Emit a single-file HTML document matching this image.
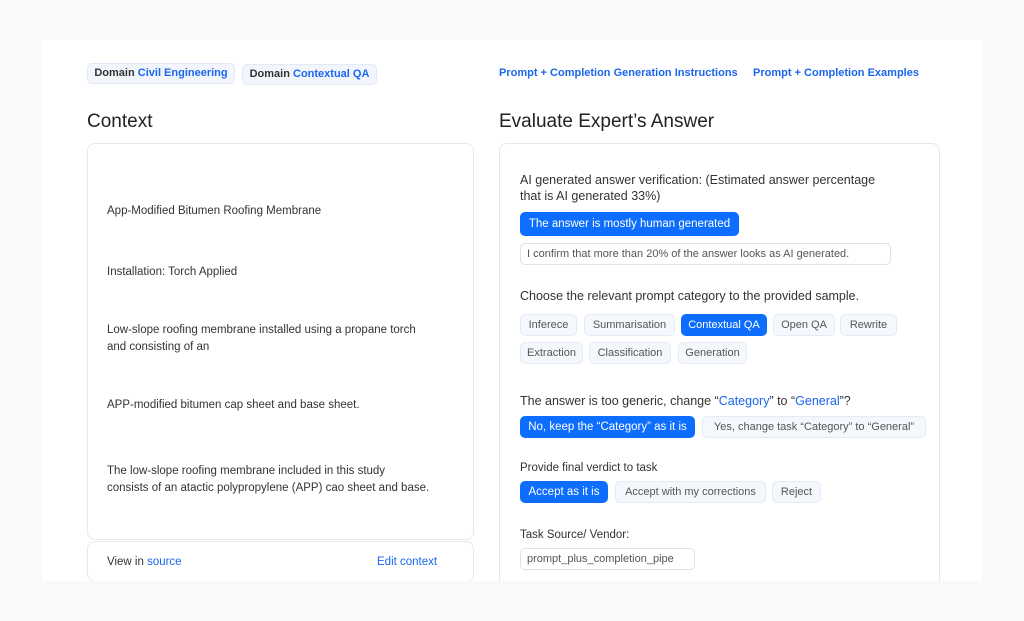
<!DOCTYPE html>
<html><head><meta charset="utf-8"><style>
*{margin:0;padding:0;box-sizing:border-box}
body{width:1024px;height:621px;background:#f8f9fb;font-family:"Liberation Sans",sans-serif;color:#2a2a2e;position:relative;overflow:hidden}
.panel{position:absolute;left:42px;top:40px;width:940px;height:541px;background:#fff}
.a{position:absolute;white-space:nowrap}
.tag{position:absolute;height:21px;line-height:19px;text-align:center;font-size:11px;font-weight:bold;background:#f2f6fc;border:1px solid #e2eaf6;border-radius:5px;color:#333;white-space:nowrap}
.h{font-size:19px;color:#222}
.box{position:absolute;border:1px solid #e6e8ec;border-radius:8px;background:#fff}
.t{font-size:11.5px;color:#333;line-height:17px}
.q{font-size:12.5px;color:#333;line-height:16px}
.chip{position:absolute;height:22px;line-height:20px;text-align:center;font-size:11px;color:#555;background:#f4f7fc;border:1px solid #e4ebf6;border-radius:5px;white-space:nowrap}
.on{background:#0d6efd;color:#fff;border-color:#0d6efd}
.inp{position:absolute;height:22px;line-height:20px;padding:0 6px;font-size:11px;color:#555;background:#fff;border:1px solid #dfe2e7;border-radius:5px;white-space:nowrap}
.b{color:#1a66ee}
</style></head><body>
<div class="panel"></div>
<div class="tag" style="left:87px;top:63px;width:148px">Domain <span class="b">Civil Engineering</span></div>
<div class="tag" style="left:242px;top:64px;width:135px">Domain <span class="b">Contextual QA</span></div>
<div class="a b" style="left:499px;top:67px;font-size:11px;font-weight:bold">Prompt + Completion Generation Instructions</div>
<div class="a b" style="left:753px;top:67px;font-size:11px;font-weight:bold">Prompt + Completion Examples</div>
<div class="a h" style="left:87px;top:111px">Context</div>
<div class="a h" style="left:499px;top:111px">Evaluate Expert’s Answer</div>

<div class="box" style="left:87px;top:143px;width:387px;height:397px"></div>
<div class="a t" style="left:107px;top:203px">App-Modified Bitumen Roofing Membrane</div>
<div class="a t" style="left:107px;top:264px">Installation: Torch Applied</div>
<div class="a t" style="left:107px;top:322px">Low-slope roofing membrane installed using a propane torch<br>and consisting of an</div>
<div class="a t" style="left:107px;top:397px">APP-modified bitumen cap sheet and base sheet.</div>
<div class="a t" style="left:107px;top:463px">The low-slope roofing membrane included in this study<br>consists of an atactic polypropylene (APP) cao sheet and base.</div>
<div class="box" style="left:87px;top:541px;width:387px;height:41px"></div>
<div class="a t" style="left:107px;top:554px">View in <span class="b">source</span></div>
<div class="a t" style="left:377px;top:554px;color:#1a66ee">Edit context</div>

<div class="box" style="left:499px;top:143px;width:441px;height:460px"></div>
<div class="a q" style="left:520px;top:172px">AI generated answer verification: (Estimated answer percentage<br>that is AI generated 33%)</div>
<div class="chip on" style="left:520px;top:212px;width:219px;height:24px;line-height:22px;font-size:11.5px">The answer is mostly human generated</div>
<div class="inp" style="left:520px;top:243px;width:371px">I confirm that more than 20% of the answer looks as AI generated.</div>
<div class="a q" style="left:520px;top:288px">Choose the relevant prompt category to the provided sample.</div>
<div class="chip" style="left:520px;top:314px;width:57px">Inferece</div>
<div class="chip" style="left:584px;top:314px;width:91px">Summarisation</div>
<div class="chip on" style="left:681px;top:314px;width:86px">Contextual QA</div>
<div class="chip" style="left:773px;top:314px;width:62px">Open QA</div>
<div class="chip" style="left:840px;top:314px;width:57px">Rewrite</div>
<div class="chip" style="left:520px;top:342px;width:63px">Extraction</div>
<div class="chip" style="left:589px;top:342px;width:82px">Classification</div>
<div class="chip" style="left:678px;top:342px;width:69px">Generation</div>
<div class="a q" style="left:520px;top:393px">The answer is too generic, change “<span class="b">Category</span>” to “<span class="b">General</span>”?</div>
<div class="chip on" style="left:520px;top:416px;width:175px;font-size:11.5px">No, keep the “Category” as it is</div>
<div class="chip" style="left:702px;top:416px;width:224px">Yes, change task “Category” to “General”</div>
<div class="a t" style="left:520px;top:460px">Provide final verdict to task</div>
<div class="chip on" style="left:520px;top:481px;width:88px;font-size:11.5px">Accept as it is</div>
<div class="chip" style="left:615px;top:481px;width:151px">Accept with my corrections</div>
<div class="chip" style="left:772px;top:481px;width:49px">Reject</div>
<div class="a t" style="left:520px;top:527px">Task Source/ Vendor:</div>
<div class="inp" style="left:520px;top:548px;width:175px">prompt_plus_completion_pipe</div>
<div style="position:absolute;left:0;top:581px;width:1024px;height:40px;background:#f8f9fb"></div>
</body></html>
